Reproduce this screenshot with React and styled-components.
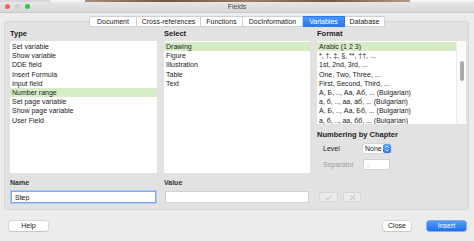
import styled, { createGlobalStyle } from "styled-components";

const typeItems = [
  "Set variable",
  "Show variable",
  "DDE field",
  "Insert Formula",
  "Input field",
  "Number range",
  "Set page variable",
  "Show page variable",
  "User Field",
];

const selectItems = ["Drawing", "Figure", "Illustration", "Table", "Text"];

const formatItems = [
  "Arabic (1 2 3)",
  "*, †, ‡, §, **, ††, ...",
  "1st, 2nd, 3rd, ...",
  "One, Two, Three, ...",
  "First, Second, Third, ...",
  "А, Б, .., Аа, Аб, ... (Bulgarian)",
  "а, б, .., аа, аб, ... (Bulgarian)",
  "А, Б, .., Аа, Бб, ... (Bulgarian)",
  "а, б, .., аа, бб, ... (Bulgarian)",
];

const tabs = [
  { label: "Document", width: 48 },
  { label: "Cross-references", width: 64 },
  { label: "Functions", width: 42 },
  { label: "DocInformation", width: 60 },
  { label: "Variables", width: 42, active: true },
  { label: "Database", width: 40 },
];

const App = () => {
  return (
    <Window>
      <GlobalStyle />
      <TitleBar>
        <Lights>
          <Light color="#fc5f57" />
          <Light color="#cfcfcf" />
          <Light color="#33c748" />
        </Lights>
        <Title>Fields</Title>
        <span />
      </TitleBar>
      <Body>
        <TabBar>
          {tabs.map((t) => (
            <Tab key={t.label} width={t.width} active={t.active}>
              {t.label}
            </Tab>
          ))}
        </TabBar>
        <Panel>
          <Column>
            <Heading>Type</Heading>
            <List>
              {typeItems.map((item) => (
                <Row key={item} selected={item === "Number range"}>
                  {item}
                </Row>
              ))}
            </List>
            <FieldLabel>Name</FieldLabel>
            <TextBox focused defaultValue="Step" />
          </Column>
          <Column>
            <Heading>Select</Heading>
            <List>
              {selectItems.map((item) => (
                <Row key={item} selected={item === "Drawing"}>
                  {item}
                </Row>
              ))}
            </List>
            <FieldLabel>Value</FieldLabel>
            <TextBox defaultValue="" />
          </Column>
          <Column>
            <Heading>Format</Heading>
            <FormatBox>
              <FormatList>
                {formatItems.map((item, i) => (
                  <Row key={item} selected={i === 0}>
                    {item}
                  </Row>
                ))}
              </FormatList>
              <ScrollTrack>
                <ScrollThumb />
              </ScrollTrack>
            </FormatBox>
            <SubHeading>Numbering by Chapter</SubHeading>
            <OptionRow gap={4}>
              <OptionLabel>Level</OptionLabel>
              <Select>
                <span>None</span>
                <Stepper>
                  <svg width="8" height="9" viewBox="0 0 8 9">
                    <path d="M2.3 3.6 L4 1.9 L5.7 3.6" fill="none" stroke="#fff" strokeWidth="0.9" />
                    <path d="M2.3 5.4 L4 7.1 L5.7 5.4" fill="none" stroke="#fff" strokeWidth="0.9" />
                  </svg>
                </Stepper>
              </Select>
            </OptionRow>
            <OptionRow gap={6}>
              <OptionLabel disabled>Separator</OptionLabel>
              <SmallBox>.</SmallBox>
            </OptionRow>
            <Spacer />
            <CheckRow>
              <IconButton width={17}>
                <svg width="9" height="7" viewBox="0 0 9 7">
                  <path d="M1 3.6 L3.4 5.9 L8 1" fill="none" stroke="#b8b8b8" strokeWidth="0.9" />
                </svg>
              </IconButton>
              <IconButton width={16}>
                <svg width="7" height="7" viewBox="0 0 7 7">
                  <path d="M1 1 L6 6 M6 1 L1 6" fill="none" stroke="#b8b8b8" strokeWidth="0.9" />
                </svg>
              </IconButton>
            </CheckRow>
          </Column>
        </Panel>
        <ButtonBar>
          <Button width={39}>Help</Button>
          <Button width={28} push>
            Close
          </Button>
          <Button width={39} primary>
            Insert
          </Button>
        </ButtonBar>
      </Body>
    </Window>
  );
};

const GlobalStyle = createGlobalStyle`
  html, body {
    margin: 0;
    padding: 0;
  }
  body {
    font-family: "Liberation Sans", Arial, sans-serif;
    font-size: 7px;
    color: #222;
    background: #ececec;
  }
`;

const Window = styled.div`
  width: 474px;
  height: 241px;
  display: flex;
  flex-direction: column;
  overflow: hidden;
  background: #ececec;
`;

const TitleBar = styled.div`
  height: 13px;
  flex-shrink: 0;
  display: grid;
  grid-template-columns: 1fr auto 1fr;
  align-items: center;
  padding: 1px 5px 0;
  box-sizing: border-box;
  background:
    linear-gradient(90deg, #a8907a, #6f5542 25%, #9c7e66 50%, #735843 75%, #b39a84) 85px 0 / 325px 2px no-repeat,
    linear-gradient(90deg, #d8d8d8 0 50px, #f4f4f4 50px) 0 0 / 100% 2px no-repeat,
    linear-gradient(#e9e9e9, #d7d7d7);
  border-bottom: 1px solid #c9c9c9;
`;

const Lights = styled.div`
  display: flex;
  gap: 5px;
`;

const Light = styled.span`
  width: 5px;
  height: 5px;
  border-radius: 50%;
  background: ${(p) => p.color};
`;

const Title = styled.div`
  color: #4a4a4a;
  font-size: 7px;
`;

const Body = styled.div`
  flex: 1;
  display: flex;
  flex-direction: column;
  padding-top: 3px;
`;

const TabBar = styled.div`
  display: flex;
  justify-content: center;
  margin-bottom: -6px;
  position: relative;
  z-index: 1;
`;

const Tab = styled.div`
  width: ${(p) => p.width}px;
  height: 11px;
  box-sizing: border-box;
  display: flex;
  align-items: center;
  justify-content: center;
  background: ${(p) => (p.active ? "linear-gradient(#4b97f8, #2a79f2)" : "#fff")};
  color: ${(p) => (p.active ? "#fff" : "#222")};
  border: 1px solid ${(p) => (p.active ? "#2a79f2" : "#d0d0d0")};
  border-left-width: 0;
  white-space: nowrap;

  &:first-child {
    border-left-width: 1px;
    border-radius: 2px 0 0 2px;
  }
  &:last-child {
    border-radius: 0 2px 2px 0;
  }
`;

const Panel = styled.div`
  height: 189px;
  box-sizing: border-box;
  margin: 0 5px 0 4px;
  padding: 7px 3px 6px 5px;
  background: #e2e2e2;
  border: 1px solid #d6d6d6;
  border-radius: 3px;
  display: grid;
  grid-template-columns: 147px 146px 149px;
  column-gap: 7px;
`;

const Column = styled.div`
  display: flex;
  flex-direction: column;
  min-height: 0;
`;

const Heading = styled.div`
  font-weight: bold;
  font-size: 7.5px;
  line-height: 10px;
  margin-bottom: 2px;
  color: #1e1e1e;
`;

const List = styled.div`
  flex: 1;
  background: #fff;
  padding-top: 1px;
  overflow: hidden;
`;

const Row = styled.div`
  height: 9.2px;
  line-height: 9.2px;
  padding-left: 2px;
  white-space: nowrap;
  background: ${(p) => (p.selected ? "#d5ecc6" : "transparent")};
`;

const FieldLabel = styled.div`
  font-weight: bold;
  font-size: 7px;
  line-height: 10px;
  margin-top: 5px;
  color: #333;
`;

const TextBox = styled.input`
  height: 12px;
  box-sizing: border-box;
  margin: 3px 1px 0;
  padding: 0 3px;
  font: 7px "Liberation Sans", Arial, sans-serif;
  color: #111;
  background: #fff;
  border: 1px solid ${(p) => (p.focused ? "#7eaaec" : "#d2d2d2")};
  box-shadow: ${(p) => (p.focused ? "0 0 0 1px #a9c8f3" : "none")};
  outline: none;
`;

const FormatBox = styled.div`
  height: 83px;
  display: flex;
  background: #fff;
`;

const FormatList = styled.div`
  flex: 1;
  padding-top: 1px;
  overflow: hidden;
`;

const ScrollTrack = styled.div`
  width: 9px;
  background: #fafafa;
  border-left: 1px solid #ededed;
  display: flex;
  justify-content: center;
`;

const ScrollThumb = styled.div`
  width: 4px;
  height: 20px;
  margin-top: 20px;
  border-radius: 2px;
  background: #a9a9a9;
`;

const SubHeading = styled.div`
  font-weight: bold;
  font-size: 7.5px;
  line-height: 10px;
  margin-top: 6px;
  color: #1e1e1e;
`;

const OptionRow = styled.div`
  display: flex;
  align-items: center;
  margin-top: ${(p) => p.gap}px;
  padding-left: 6px;
`;

const OptionLabel = styled.div`
  width: 40px;
  color: ${(p) => (p.disabled ? "#9c9c9c" : "#222")};
`;

const Select = styled.div`
  width: 28px;
  height: 9px;
  box-sizing: border-box;
  display: flex;
  align-items: center;
  justify-content: space-between;
  background: #fff;
  padding-left: 2px;
  border-radius: 2px;
  box-shadow: 0 0 0 0.5px #c8c8c8;
`;

const Stepper = styled.div`
  width: 8px;
  height: 9px;
  display: flex;
  border-radius: 2px;
  background: linear-gradient(#5aa2fa, #2b78f0);
`;

const SmallBox = styled.div`
  width: 27px;
  height: 11px;
  box-sizing: border-box;
  background: #fff;
  border: 1px solid #d4d4d4;
  padding-left: 3px;
  line-height: 9px;
  color: #555;
`;

const Spacer = styled.div`
  flex: 1;
`;

const CheckRow = styled.div`
  display: flex;
  gap: 5px;
  padding-left: 2px;
  margin-bottom: 1px;
`;

const IconButton = styled.div`
  width: ${(p) => p.width}px;
  height: 8px;
  display: flex;
  align-items: center;
  justify-content: center;
  background: #ebebeb;
  border: 1px solid #d6d6d6;
  border-radius: 2px;
`;

const ButtonBar = styled.div`
  flex: 1;
  display: flex;
  align-items: center;
  padding: 0 8px 0 9px;
`;

const Button = styled.div`
  width: ${(p) => p.width}px;
  height: 10px;
  box-sizing: border-box;
  margin-left: ${(p) => (p.push ? "auto" : p.primary ? "16px" : "0")};
  display: flex;
  align-items: center;
  justify-content: center;
  border-radius: 2px;
  font-size: 7px;
  color: ${(p) => (p.primary ? "#fff" : "#222")};
  background: ${(p) => (p.primary ? "linear-gradient(#529df9, #1f6fef)" : "#fff")};
  box-shadow: ${(p) => (p.primary ? "0 0 0 0.5px #2a6fdc" : "0 0 0 0.5px #c4c4c4, 0 0.5px 1px rgba(0,0,0,0.15)")};
`;

export default App;
